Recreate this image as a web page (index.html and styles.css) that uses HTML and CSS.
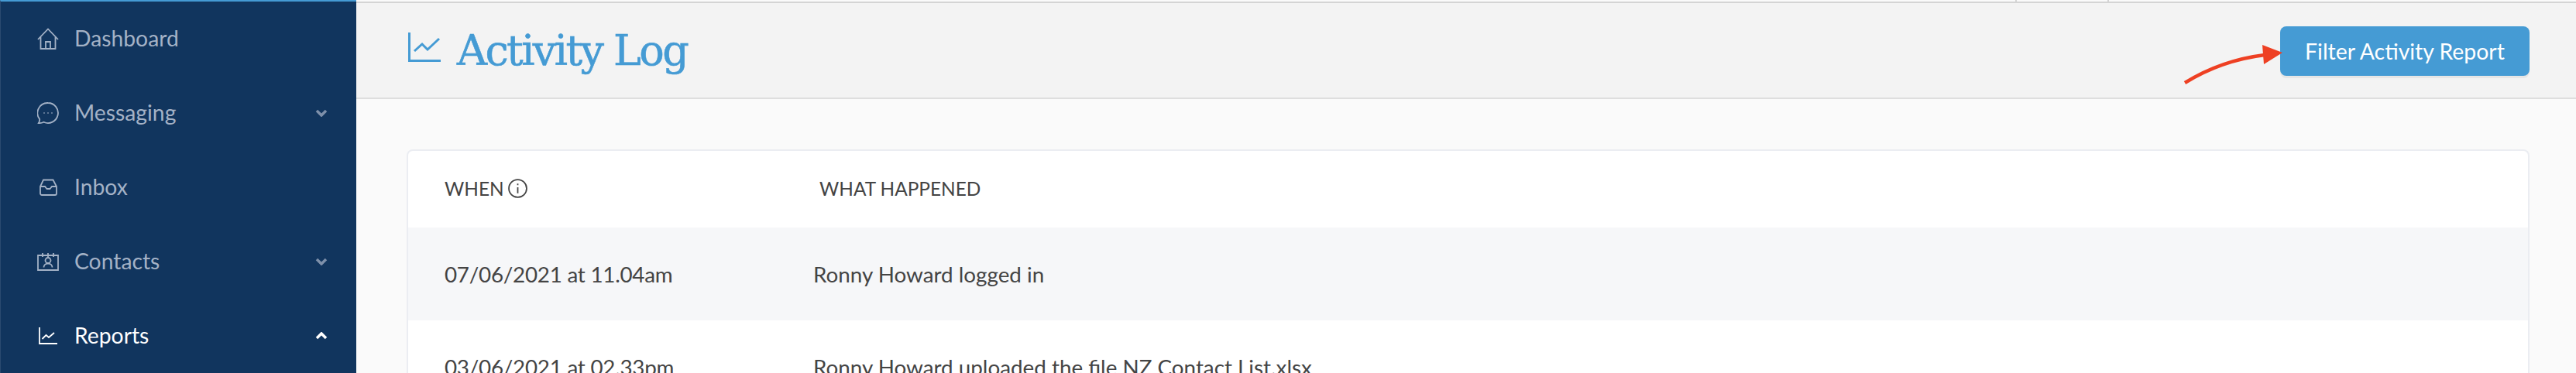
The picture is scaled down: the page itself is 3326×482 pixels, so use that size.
FILE: index.html
```html
<!DOCTYPE html>
<html>
    <head>
        <meta name="viewport" content="width=device-width, initial-scale=1">
        <link rel="stylesheet" href="styles.css">
    </head>
    <body>
        <div class="layout">
            <!-- Sidebar -->
            <div class="sidebar">
                <div class="nav_item">
                    <svg class="nav_icon" viewBox="0 0 28 28"><path d="M1 15 14 1.500 27 15M4.500 12v15h19V12M11 27v-9h6v9"/></svg>
                    <span>Dashboard</span>
                </div>
                <div class="nav_item">
                    <svg class="nav_icon" viewBox="0 0 28 28"><path d="M14 1a13 13 0 1 1-5.500 24.800C6.500 26.800 4 27.300 1.800 27c1-1.500 1.500-3 1.400-5A13 13 0 0 1 14 1Z"/><path class="dots" d="M8.500 14h1M13.500 14h1M18.500 14h1"/></svg>
                    <span>Messaging</span>
                    <svg class="nav_chevron" viewBox="0 0 16 10"><path d="M2 2l6 6 6-6"/></svg>
                </div>
                <div class="nav_item">
                    <svg class="nav_icon" viewBox="0 0 28 28"><path d="M8 4.500h12.500L25 13v9a2 2 0 0 1-2 2H6a2 2 0 0 1-2-2v-9ZM4 13h6l2.500 3h4l2.500-3h6"/></svg>
                    <span>Inbox</span>
                </div>
                <div class="nav_item">
                    <svg class="nav_icon" viewBox="0 0 28 28"><path d="M1 6h26v19H1ZM7 3v5M14 3v5M21 3v5"/><circle cx="14" cy="12.500" r="3.500"/><path d="M8.500 21.500c0-3 2.500-5 5.500-5s5.500 2 5.500 5"/></svg>
                    <span>Contacts</span>
                    <svg class="nav_chevron" viewBox="0 0 16 10"><path d="M2 2l6 6 6-6"/></svg>
                </div>
                <div class="nav_item active">
                    <svg class="nav_icon" viewBox="0 0 28 28"><path d="M3 3v21h23M6.500 18l5-5 3.500 3 7-6"/></svg>
                    <span>Reports</span>
                    <svg class="nav_chevron" viewBox="0 0 16 10"><path d="M2 8l6-6 6 6"/></svg>
                </div>
            </div>

            <!-- Main -->
            <div class="main">
                <div class="top_tab"></div>
                <div class="page_header">
                    <div class="page_title">
                        <svg class="title_icon" viewBox="0 0 42 38"><path d="M1.500 0v36.500H42M8 24l10-9 7 7L40 8"/></svg>
                        <h1>Activity Log</h1>
                    </div>
                    <div class="filter_wrap">
                        <button class="filter_btn">Filter Activity Report</button>
                        <svg class="arrow" viewBox="0 0 130 60"><path class="arrow_line" d="M3 57C32 39 66 26 106 21"/><path class="arrow_head" d="M103 8 129 18 105 33Z"/></svg>
                    </div>
                </div>

                <div class="content">
                    <div class="card">
                        <div class="table_head">
                            <div class="col_when">WHEN
                                <svg class="info_icon" viewBox="0 0 24 24"><circle cx="12" cy="12" r="11"/><path d="M12 10.500V18M12 6v2"/></svg>
                            </div>
                            <div class="col_what">WHAT HAPPENED</div>
                        </div>
                        <div class="table_row shaded">
                            <div class="col_when">07/06/2021 at 11.04am</div>
                            <div class="col_what">Ronny Howard logged in</div>
                        </div>
                        <div class="table_row">
                            <div class="col_when">03/06/2021 at 02.33pm</div>
                            <div class="col_what">Ronny Howard uploaded the file NZ Contact List.xlsx</div>
                        </div>
                    </div>
                </div>
            </div>
        </div>
    </body>
</html>
```

FILE: styles.css
```css
html, body {
  margin: 0;
  height: 100%;
  overflow: hidden;
}

body {
  font-family: Lato, Arial, sans-serif;
  background-color: #fafafa;
  color: #444444;
}

.layout {
  display: flex;
  height: 482px;
}

.sidebar {
  width: 459px;
  flex: none;
  background-color: #11355e;
  border-top: 2px solid #459bd4;
  border-left: 1px solid #2b4a70;
}

.nav_item {
  display: flex;
  align-items: center;
  height: 96px;
  padding-left: 47px;
  padding-right: 37px;
  font-size: 28.300px;
  color: #a4b2c6;
}

.nav_item span {
  flex: 1;
  margin-left: 20px;
  padding-bottom: 2px;
}

.nav_icon {
  width: 28px;
  height: 28px;
  fill: none;
  stroke: currentColor;
  stroke-width: 1.8;
}

.nav_icon .dots {
  stroke-width: 2;
}

.nav_chevron {
  width: 16px;
  height: 10px;
  fill: none;
  stroke: #7e90aa;
  stroke-width: 3.500;
}

.nav_item.active {
  color: #ffffff;
}

.nav_item.active .nav_chevron {
  stroke: #ffffff;
}

.main {
  flex: 1;
  position: relative;
}

.top_tab {
  position: absolute;
  top: 0;
  left: 2142px;
  width: 117px;
  height: 2px;
  border-left: 2px solid #d4d4d4;
  border-right: 2px solid #d4d4d4;
}

.page_header {
  display: flex;
  justify-content: space-between;
  align-items: center;
  box-sizing: border-box;
  height: 126px;
  margin-top: 2px;
  padding: 0 60px 0 67px;
  background-color: #f3f3f3;
  border-top: 2px solid #d4d4d4;
  border-bottom: 2px solid #dedede;
}

.page_title {
  display: flex;
  align-items: center;
  gap: 21px;
}

.title_icon {
  width: 42px;
  height: 38px;
  margin-bottom: 8px;
  fill: none;
  stroke: #459bd4;
  stroke-width: 3;
}

h1 {
  margin: 0;
  font-family: "DejaVu Serif", serif;
  font-size: 54px;
  font-weight: 400;
  letter-spacing: -2.600px;
  -webkit-text-stroke: 0.6px #459bd4;
  color: #459bd4;
}

.filter_wrap {
  display: flex;
  align-items: center;
  position: relative;
}

.arrow {
  position: absolute;
  left: -126px;
  top: 18px;
  width: 130px;
  height: 60px;
}

.arrow_line {
  fill: none;
  stroke: #ee4023;
  stroke-width: 4.500;
}

.arrow_head {
  fill: #ee4023;
}

.filter_btn {
  width: 322px;
  height: 64px;
  margin-top: 2px;
  padding: 0;
  border: none;
  border-radius: 8px;
  background-color: #459bd4;
  box-shadow: 0 3px 0 #e6e6e6;
  color: #ffffff;
  font-family: Lato, Arial, sans-serif;
  font-size: 28.400px;
}

.content {
  padding: 65px 60px 0 65px;
}

.card {
  background-color: #ffffff;
  border: 2px solid #ebedf2;
  border-bottom: none;
  border-radius: 8px 8px 0 0;
}

.table_head, .table_row {
  display: flex;
  align-items: center;
  padding-left: 47px;
}

.table_head {
  box-sizing: border-box;
  height: 99px;
  padding-bottom: 2px;
  font-size: 24.400px;
}

.table_row {
  height: 120px;
  font-size: 27.800px;
}

.table_row .col_when {
  letter-spacing: -0.250px;
}

.shaded {
  background-color: #f6f7f9;
}

.col_when {
  width: 476px;
  flex: none;
  display: flex;
  align-items: center;
  gap: 5px;
}

.table_head .col_what {
  margin-left: 8px;
}

.info_icon {
  width: 25px;
  height: 25px;
  fill: none;
  stroke: #444444;
  stroke-width: 1.700;
}
```
